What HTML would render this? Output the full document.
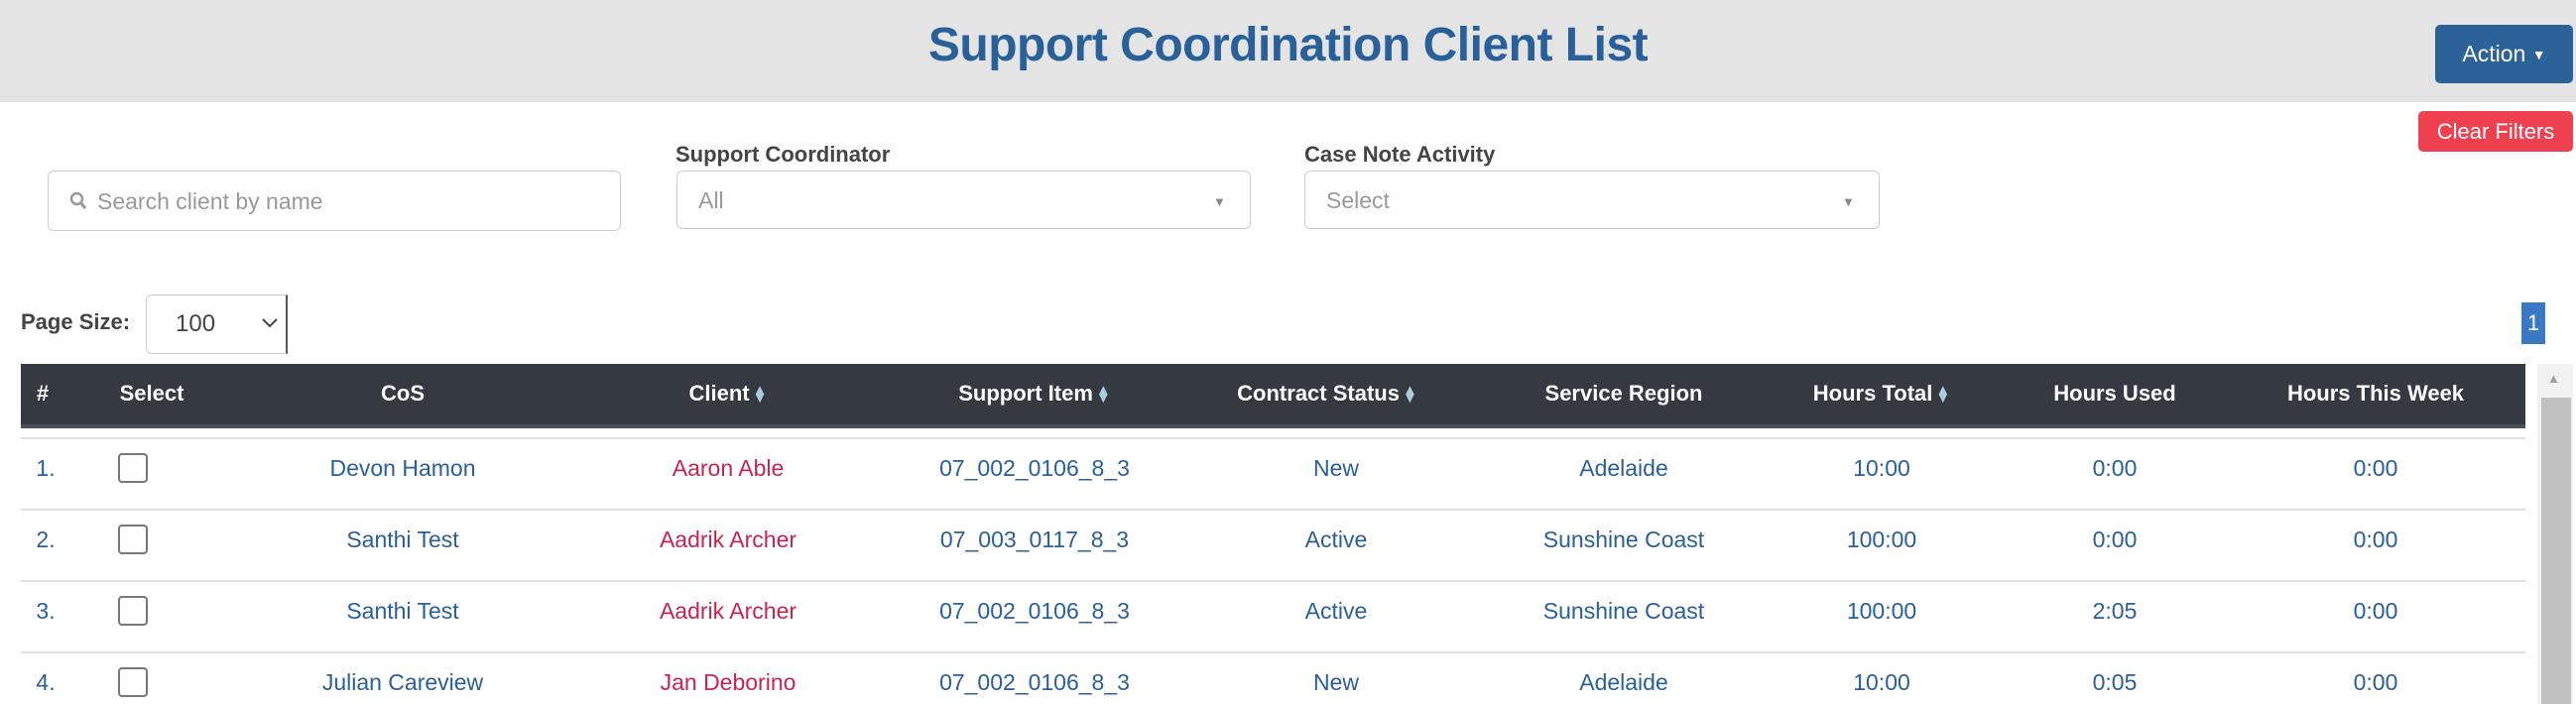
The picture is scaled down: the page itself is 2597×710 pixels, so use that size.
<!DOCTYPE html>
<html><head><meta charset="utf-8"><style>
*{box-sizing:border-box;margin:0;padding:0}
body{width:2597px;height:710px;overflow:hidden;background:#fff;font-family:"Liberation Sans",sans-serif;position:relative}
.a{position:absolute}
.hdr{left:0;top:0;width:2597px;height:103px;background:#e4e4e4}
.title{left:0;width:2597px;top:18px;text-align:center;font-size:48px;color:#2a6099;font-weight:bold;letter-spacing:-0.5px}
.btn{color:#fff;border-radius:5px;display:flex;align-items:center;justify-content:center}
.box{border:1.5px solid #ccc;border-radius:6px;background:#fff}
.lbl{font-size:22px;font-weight:bold;color:#444}
.ph{font-size:23px;color:#999}
.th{left:21px;top:367px;width:2525px;height:61px;background:#343a40}
.th2{left:21px;top:428px;width:2525px;height:4px;background:#4a5057}
.h{top:384px;color:#fff;font-weight:bold;font-size:22px;transform:translateX(-50%);white-space:nowrap}
.c{font-size:23px;color:#2a6099;transform:translateX(-50%);white-space:nowrap}
.r{color:#c7254e}
.sep{left:21px;width:2525px;height:2px;background:#dee2e6}
.cb{left:119px;width:30px;height:30px;border:2px solid #777;border-radius:4px}
.s{display:inline-block;font-size:15px;color:#a9cde0;line-height:8px;vertical-align:middle;margin-left:3px}
</style></head><body>
<div class="a hdr"></div>
<div class="a title">Support Coordination Client List</div>
<div class="a btn" style="left:2455px;top:25px;width:139px;height:59px;background:#2b6399;font-size:23px">Action&nbsp;<span style="font-size:14px">▼</span></div>
<div class="a btn" style="left:2438px;top:112px;width:156px;height:41px;background:#ef4050;font-size:22px">Clear Filters</div>

<div class="a box" style="left:48px;top:172px;width:578px;height:61px"></div>
<svg class="a" style="left:70px;top:193px" width="18" height="20" viewBox="0 0 18 20"><circle cx="7.5" cy="7.5" r="5.5" fill="none" stroke="#999" stroke-width="2.5"/><path d="M11 11l5 6" stroke="#999" stroke-width="3"/></svg>
<div class="a ph" style="left:98px;top:190px">Search client by name</div>

<div class="a lbl" style="left:681px;top:143px">Support Coordinator</div>
<div class="a box" style="left:682px;top:172px;width:579px;height:59px"></div>
<div class="a ph" style="left:704px;top:189px">All</div>
<div class="a" style="left:1223px;top:196px;font-size:13px;color:#888">▼</div>

<div class="a lbl" style="left:1315px;top:143px">Case Note Activity</div>
<div class="a box" style="left:1315px;top:172px;width:580px;height:59px"></div>
<div class="a ph" style="left:1337px;top:189px">Select</div>
<div class="a" style="left:1857px;top:196px;font-size:13px;color:#888">▼</div>

<div class="a lbl" style="left:21px;top:312px">Page Size:</div>
<div class="a box" style="left:147px;top:297px;width:143px;height:60px;border-right:2px solid #555;border-radius:6px 0 0 6px"></div>
<div class="a" style="left:177px;top:313px;font-size:24px;color:#444">100</div>
<svg class="a" style="left:263px;top:320px" width="18" height="12" viewBox="0 0 18 12"><path d="M2 2l7 7 7-7" fill="none" stroke="#444" stroke-width="2"/></svg>

<div class="a" style="left:2542px;top:305px;width:24px;height:42px;background:#3a78c3;color:#fff;font-size:22px;text-align:center;line-height:42px">1</div>

<div class="a th"></div><div class="a th2"></div>
<div class="a h" style="left:43px">#</div>
<div class="a h" style="left:153px">Select</div>
<div class="a h" style="left:406px">CoS</div>
<div class="a h" style="left:734px">Client<span class="s">▲<br>▼</span></div>
<div class="a h" style="left:1043px">Support Item<span class="s">▲<br>▼</span></div>
<div class="a h" style="left:1338px">Contract Status<span class="s">▲<br>▼</span></div>
<div class="a h" style="left:1637px">Service Region</div>
<div class="a h" style="left:1897px">Hours Total<span class="s">▲<br>▼</span></div>
<div class="a h" style="left:2132px">Hours Used</div>
<div class="a h" style="left:2395px">Hours This Week</div>

<div class="a" style="left:2558px;top:367px;width:36px;height:343px;background:#f1f1f1"></div>
<div class="a" style="left:2562px;top:401px;width:30px;height:309px;background:#c1c1c1"></div>
<div class="a" style="left:2568px;top:374px;font-size:13px;color:#a0a0a0">▲</div>

<div class="a sep" style="top:441px"></div>
<div class="a sep" style="top:513px"></div>
<div class="a sep" style="top:585px"></div>
<div class="a sep" style="top:657px"></div>

<div class="a cb" style="top:457px"></div>
<div class="a cb" style="top:529px"></div>
<div class="a cb" style="top:601px"></div>
<div class="a cb" style="top:673px"></div>

<div class="a c" style="left:46px;top:459px">1.</div>
<div class="a c" style="left:406px;top:459px">Devon Hamon</div>
<div class="a c r" style="left:734px;top:459px">Aaron Able</div>
<div class="a c" style="left:1043px;top:459px">07_002_0106_8_3</div>
<div class="a c" style="left:1347px;top:459px">New</div>
<div class="a c" style="left:1637px;top:459px">Adelaide</div>
<div class="a c" style="left:1897px;top:459px">10:00</div>
<div class="a c" style="left:2132px;top:459px">0:00</div>
<div class="a c" style="left:2395px;top:459px">0:00</div>

<div class="a c" style="left:46px;top:531px">2.</div>
<div class="a c" style="left:406px;top:531px">Santhi Test</div>
<div class="a c r" style="left:734px;top:531px">Aadrik Archer</div>
<div class="a c" style="left:1043px;top:531px">07_003_0117_8_3</div>
<div class="a c" style="left:1347px;top:531px">Active</div>
<div class="a c" style="left:1637px;top:531px">Sunshine Coast</div>
<div class="a c" style="left:1897px;top:531px">100:00</div>
<div class="a c" style="left:2132px;top:531px">0:00</div>
<div class="a c" style="left:2395px;top:531px">0:00</div>

<div class="a c" style="left:46px;top:603px">3.</div>
<div class="a c" style="left:406px;top:603px">Santhi Test</div>
<div class="a c r" style="left:734px;top:603px">Aadrik Archer</div>
<div class="a c" style="left:1043px;top:603px">07_002_0106_8_3</div>
<div class="a c" style="left:1347px;top:603px">Active</div>
<div class="a c" style="left:1637px;top:603px">Sunshine Coast</div>
<div class="a c" style="left:1897px;top:603px">100:00</div>
<div class="a c" style="left:2132px;top:603px">2:05</div>
<div class="a c" style="left:2395px;top:603px">0:00</div>

<div class="a c" style="left:46px;top:675px">4.</div>
<div class="a c" style="left:406px;top:675px">Julian Careview</div>
<div class="a c r" style="left:734px;top:675px">Jan Deborino</div>
<div class="a c" style="left:1043px;top:675px">07_002_0106_8_3</div>
<div class="a c" style="left:1347px;top:675px">New</div>
<div class="a c" style="left:1637px;top:675px">Adelaide</div>
<div class="a c" style="left:1897px;top:675px">10:00</div>
<div class="a c" style="left:2132px;top:675px">0:05</div>
<div class="a c" style="left:2395px;top:675px">0:00</div>
</body></html>
